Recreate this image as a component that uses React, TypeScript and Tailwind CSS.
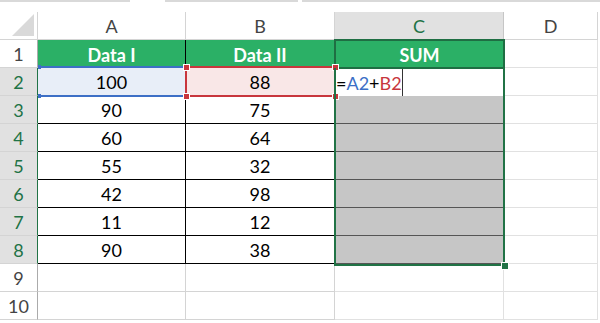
import React from 'react';

const data: [number, number][] = [
  [100, 88],
  [90, 75],
  [60, 64],
  [55, 32],
  [42, 98],
  [11, 12],
  [90, 38],
];

const cols = ['A', 'B', 'C', 'D'];

const RowHead = ({ n, selected }: { n: number; selected: boolean }) => (
  <div
    className={
      'h-[28px] flex items-center justify-center border-b border-r ' +
      (selected
        ? 'bg-[#e1e1e1] text-[#217346] border-b-[#d4d4d4] border-r-[#217346]'
        : 'bg-white text-[#444] border-b-[#d4d4d4] border-r-[#ababab]')
    }
  >
    {n}
  </div>
);

export default function App() {
  return (
    <div className="relative w-[600px] h-[323px] overflow-hidden bg-white font-['Lato',sans-serif] text-[18px] text-black">
      {/* thin strip at the very top */}
      <div className="flex h-[12px] items-start">
        <div className="h-[2px] w-[130px] bg-[#d9d9d9]" />
        <div className="w-[35px]" />
        <div className="h-[2px] w-[133px] bg-[#d9d9d9]" />
        <div className="w-[4px]" />
        <div className="h-[2px] flex-1 bg-[#d9d9d9]" />
      </div>

      <div className="grid grid-cols-[38px_148px_149px_169px_94px] leading-none">
        {/* column headers */}
        <div className="h-[28px] bg-white border-b border-r border-[#d4d4d4] flex items-end justify-end p-[3px]">
          <svg width="22" height="22" viewBox="0 0 22 22">
            <polygon points="22,0 22,22 0,22" fill="#d9d9d9" />
          </svg>
        </div>
        {cols.map((c) => (
          <div
            key={c}
            className={
              'h-[28px] flex items-center justify-center border-b border-r ' +
              (c === 'C'
                ? 'bg-[#e1e1e1] text-[#217346] border-b-[#217346] border-r-[#c6c6c6]'
                : 'bg-white text-[#444] border-b-[#d4d4d4] border-r-[#d4d4d4]')
            }
          >
            {c}
          </div>
        ))}

        {/* row 1 */}
        <RowHead n={1} selected={false} />
        <div className="h-[28px] bg-[#2bb066] text-white font-bold flex items-center justify-center border-r border-black pt-[2px]">
          Data I
        </div>
        <div className="h-[28px] bg-[#2bb066] text-white font-bold flex items-center justify-center border-r border-black pt-[2px]">
          Data II
        </div>
        <div className="h-[28px] bg-[#2bb066] text-white font-bold flex items-center justify-center pt-[2px]">
          SUM
        </div>
        <div className="h-[28px] border-b border-r border-[#e1e1e1]" />

        {/* rows 2-8 */}
        {data.map(([a, b], i) => {
          const r = i + 2;
          const first = r === 2;
          return (
            <React.Fragment key={r}>
              <RowHead n={r} selected />
              <div
                className={
                  'h-[28px] flex items-center justify-center border-r border-b border-black pt-[1px] ' +
                  (first ? 'bg-[#e8eef8]' : 'bg-white')
                }
              >
                {a}
              </div>
              <div
                className={
                  'h-[28px] flex items-center justify-center border-r border-b border-black pt-[1px] ' +
                  (first ? 'bg-[#f9e7e7]' : 'bg-white')
                }
              >
                {b}
              </div>
              {first ? (
                <div className="h-[28px] bg-white flex items-center">
                  <div className="h-full w-[68px] border-r border-[#333] flex items-center pl-[1px] pt-[1px] whitespace-nowrap">
                    <span>=</span>
                    <span className="text-[#3d6fc6]">A2</span>
                    <span>+</span>
                    <span className="text-[#c8363d]">B2</span>
                  </div>
                </div>
              ) : (
                <div className="h-[28px] bg-[#c6c6c6] border-b border-[#555]" />
              )}
              <div className="h-[28px] border-b border-r border-[#e1e1e1]" />
            </React.Fragment>
          );
        })}

        {/* rows 9-10 */}
        {[9, 10].map((r) => (
          <React.Fragment key={r}>
            <RowHead n={r} selected={false} />
            <div className="h-[28px] border-b border-r border-[#d4d4d4]" />
            <div className="h-[28px] border-b border-r border-[#d4d4d4]" />
            <div className="h-[28px] border-b border-r border-[#e1e1e1]" />
            <div className="h-[28px] border-b border-r border-[#e1e1e1]" />
          </React.Fragment>
        ))}
      </div>

      {/* C1 cell outline */}
      <div className="absolute left-[334px] top-[39px] w-[171px] h-[30px] border-2 border-[#1f6e43] pointer-events-none" />

      {/* A2 reference highlight */}
      <div className="absolute left-[38px] top-[66px] w-[148px] h-[2px] bg-[#3d6fc6]" />
      <div className="absolute left-[38px] top-[95px] w-[148px] h-[2px] bg-[#3d6fc6]" />
      <div className="absolute left-[38px] top-[65px] w-[3px] h-[4px] bg-[#3d6fc6]" />
      <div className="absolute left-[38px] top-[94px] w-[3px] h-[4px] bg-[#3d6fc6]" />

      {/* B2 reference highlight */}
      <div className="absolute left-[185px] top-[66px] w-[151px] h-[31px] border-2 border-[#c8363d]" />
      <div className="absolute left-[183px] top-[64px] w-[5px] h-[5px] bg-[#c8363d] border border-white box-content" />
      <div className="absolute left-[332px] top-[64px] w-[5px] h-[5px] bg-[#c8363d] border border-white box-content" />
      <div className="absolute left-[183px] top-[93px] w-[5px] h-[5px] bg-[#c8363d] border border-white box-content" />
      <div className="absolute left-[332px] top-[93px] w-[5px] h-[5px] bg-[#c8363d] border border-white box-content" />

      {/* C2:C8 selection */}
      <div className="absolute left-[334px] top-[96px] w-[171px] h-[170px] border-2 border-t-0 border-[#217346]" />
      <div className="absolute left-[334px] top-[68px] w-[2px] h-[28px] bg-[#217346]" />
      <div className="absolute left-[503px] top-[68px] w-[2px] h-[28px] bg-[#217346]" />
      <div className="absolute left-[501px] top-[262px] w-[6px] h-[6px] bg-[#217346] border border-white box-content" />
    </div>
  );
}
